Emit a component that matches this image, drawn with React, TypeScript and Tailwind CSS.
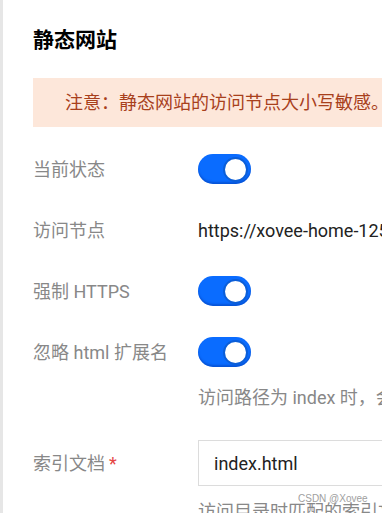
import React from 'react';

function Toggle() {
  return (
    <div className="flex h-[30px] w-[53px] shrink-0 items-center justify-end rounded-full bg-[#0a6cff] px-[3px] shadow-[inset_0_-2px_2px_rgba(0,40,140,0.35)]">
      <div className="h-[25px] w-[25px] rounded-full border-2 border-[#0b5ed8] bg-white" />
    </div>
  );
}

function Row({ label, children, className = '' }: { label: React.ReactNode; children: React.ReactNode; className?: string }) {
  return (
    <div className={`flex h-[30px] items-center ${className}`}>
      <div className="w-[165px] shrink-0 whitespace-nowrap text-[18px] text-[#888888]">{label}</div>
      <div className="flex min-w-0 flex-1 items-center">{children}</div>
    </div>
  );
}

export default function App() {
  return (
    <div
      className="relative flex h-[513px] w-[382px] overflow-hidden bg-white"
      style={{ fontFamily: 'Roboto, "Noto Sans CJK SC", sans-serif' }}
    >
      <div className="w-[3px] shrink-0 bg-[#e6e6e6]" />
      <div className="min-w-0 flex-1 pl-[30px]">
        {/* Title */}
        <h2 className="pt-[25px] text-[21px] font-bold leading-[30px] text-black">静态网站</h2>

        {/* Notice */}
        <div className="mt-[23px] flex h-[49px] items-center whitespace-nowrap bg-[#fde7da] pl-[32px] text-[18px] text-[#a8401c]">
          注意：静态网站的访问节点大小写敏感。
        </div>

        {/* Form */}
        <div className="mt-[27px]">
          <Row label="当前状态">
            <Toggle />
          </Row>
          <Row label="访问节点" className="mt-[31px]">
            <span className="whitespace-nowrap text-[18px] text-[#222222]">https://xovee-home-1259876543.tcloudbaseapp.com</span>
          </Row>
          <Row label="强制 HTTPS" className="mt-[31px]">
            <Toggle />
          </Row>
          <Row label="忽略 html 扩展名" className="mt-[31px]">
            <Toggle />
          </Row>
          <div className="mt-[17px] whitespace-nowrap pl-[165px] text-[18px] leading-[28px] text-[#888888]">
            访问路径为 index 时，会自动匹配 index.html
          </div>
          <div className="mt-[28px] flex items-center">
            <div className="w-[165px] shrink-0 whitespace-nowrap text-[18px] text-[#888888]">
              索引文档<span className="ml-[4px] text-[#e54545]">*</span>
            </div>
            <div className="flex h-[46px] w-[300px] shrink-0 items-center border border-[#dcdcdc] pl-[15px] text-[18px] text-[#222222]">
              index.html
            </div>
          </div>
          <div className="mt-[12px] whitespace-nowrap pl-[165px] text-[18px] leading-[28px] text-[#888888]">
            访问目录时匹配的索引文档
          </div>
        </div>
      </div>
      <div className="absolute left-[298px] top-[491px] text-[10px] text-[#a0a0a0]" style={{ fontFamily: '"Liberation Sans", sans-serif' }}>
        CSDN @Xovee
      </div>
    </div>
  );
}
